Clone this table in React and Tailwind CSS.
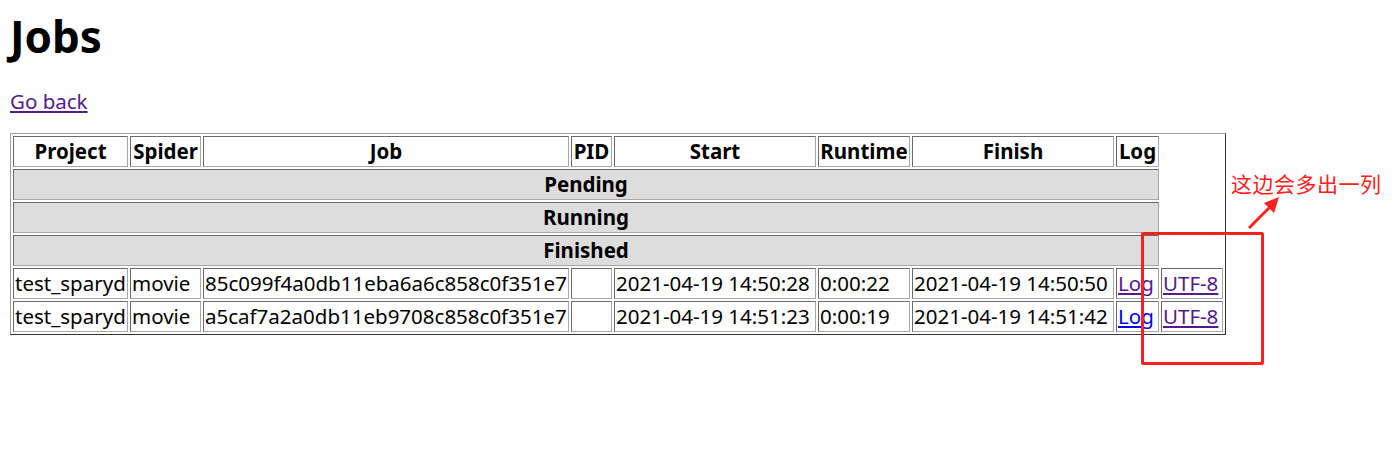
export default function App() {
  const jobs = [
    {
      project: "test_sparyd",
      spider: "movie",
      job: "85c099f4a0db11eba6a6c858c0f351e7",
      start: "2021-04-19 14:50:28",
      runtime: "0:00:22",
      finish: "2021-04-19 14:50:50",
      logVisited: true,
    },
    {
      project: "test_sparyd",
      spider: "movie",
      job: "a5caf7a2a0db11eb9708c858c0f351e7",
      start: "2021-04-19 14:51:23",
      runtime: "0:00:19",
      finish: "2021-04-19 14:51:42",
      logVisited: false,
    },
  ];

  const cell =
    "border border-t-[#6b6b6b] border-l-[#6b6b6b] border-r-[#a8a8a8] border-b-[#a8a8a8] p-[1px] h-[31px] leading-[27px] whitespace-nowrap";
  const th = cell + " font-bold text-center";
  const section = cell + " font-bold text-center bg-[#dddddd]";

  return (
    <div
      className="relative w-[1395px] h-[460px] bg-white text-black pl-[10px] overflow-hidden"
      style={{ fontFamily: '"Noto Sans", "Open Sans", sans-serif' }}
    >
      {/* Title */}
      <h1 className="text-[44px] font-bold leading-[50px] pt-[11px]">Jobs</h1>

      <p className="mt-[27px] text-[20.5px] leading-[27px]">
        <a href="#" className="underline text-[#551a8b]">
          Go back
        </a>
      </p>

      {/* Jobs table */}
      <table className="mt-[18px] border-separate border-spacing-[2px] border border-t-[#a0a0a0] border-l-[#a0a0a0] border-r-[#333333] border-b-[#333333] text-[20.5px] table-fixed w-[1216px]">
        <colgroup>
          <col className="w-[115px]" />
          <col className="w-[71px]" />
          <col className="w-[366px]" />
          <col className="w-[41px]" />
          <col className="w-[202px]" />
          <col className="w-[92px]" />
          <col className="w-[202px]" />
          <col className="w-[43px]" />
          <col className="w-[62px]" />
        </colgroup>
        <tbody>
          <tr>
            <th className={th}>Project</th>
            <th className={th}>Spider</th>
            <th className={th}>Job</th>
            <th className={th}>PID</th>
            <th className={th}>Start</th>
            <th className={th}>Runtime</th>
            <th className={th}>Finish</th>
            <th className={th}>Log</th>
          </tr>
          <tr>
            <th colSpan={8} className={section}>Pending</th>
          </tr>
          <tr>
            <th colSpan={8} className={section}>Running</th>
          </tr>
          <tr>
            <th colSpan={8} className={section}>Finished</th>
          </tr>
          {jobs.map((j) => (
            <tr key={j.job}>
              <td className={cell}>{j.project}</td>
              <td className={cell}>{j.spider}</td>
              <td className={cell}>{j.job}</td>
              <td className={cell}></td>
              <td className={cell}>{j.start}</td>
              <td className={cell}>{j.runtime}</td>
              <td className={cell}>{j.finish}</td>
              <td className={cell}>
                <a
                  href="#"
                  className={j.logVisited ? "underline text-[#551a8b]" : "underline text-[#0000ee]"}
                >
                  Log
                </a>
              </td>
              <td className={cell}>
                <a href="#" className="underline text-[#551a8b]">
                  UTF-8
                </a>
              </td>
            </tr>
          ))}
        </tbody>
      </table>

      {/* Red annotation overlay */}
      <div className="absolute left-[1141px] top-[232px] w-[123px] h-[133px] border-[3px] border-[#ff2020] rounded-[2px]" />
      <svg className="absolute left-[1245px] top-[192px]" width="40" height="40" viewBox="0 0 40 40">
        <line x1="4" y1="36" x2="26" y2="14" stroke="#ff2020" strokeWidth="3" />
        <polygon points="34,5 19,11 29,21" fill="#ff2020" />
      </svg>
      <div
        className="absolute left-[1231px] top-[170px] text-[21px] leading-[26px] text-[#ff2020] tracking-[0.5px]"
        style={{ fontFamily: '"Noto Sans CJK SC", sans-serif' }}
      >
        这边会多出一列
      </div>
    </div>
  );
}
